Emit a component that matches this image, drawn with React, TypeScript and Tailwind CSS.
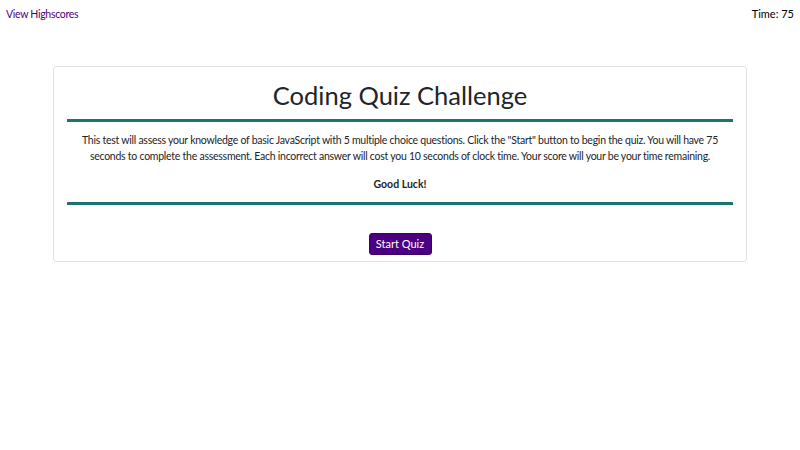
export default function App() {
  return (
    <div className="min-h-screen w-full bg-white text-[#212529] [font-family:Lato,'Noto_Sans',sans-serif]">
      {/* Top bar */}
      <header className="flex items-center justify-between px-[6px] pt-[6px] text-[10.5px] leading-[16px]">
        <a href="#" className="tracking-[-0.3px] text-[#4b0082]">View Highscores</a>
        <span className="text-[11px] text-black">Time: 75</span>
      </header>

      {/* Quiz card */}
      <main className="mx-auto mt-[44px] w-[694px] rounded-[4px] border border-[#e2e2e2] px-[13px] pt-[10px] pb-[6px]">
        <h1 className="text-center text-[25.5px] leading-[36px]">Coding Quiz Challenge</h1>
        <hr className="mt-[6px] border-t-[3px] border-[#1b7470]" />
        <p className="mt-[10px] text-center text-[10.5px] leading-[16px] tracking-[-0.25px]">
          This test will assess your knowledge of basic JavaScript with 5 multiple choice questions. Click the "Start" button to begin the quiz. You will have 75
          <br />
          seconds to complete the assessment. Each incorrect answer will cost you 10 seconds of clock time. Your score will your be your time remaining.
        </p>
        <p className="mt-[12px] text-center text-[10.5px] leading-[16px] font-bold">Good Luck!</p>
        <hr className="mt-[10px] border-t-[3px] border-[#1b7470]" />
        <div className="mt-[28px] flex justify-center">
          <button className="h-[22px] w-[63px] rounded-[3px] border border-[#3a0066] bg-[#4b0082] text-[11px] text-white">Start Quiz</button>
        </div>
      </main>
    </div>
  )
}
